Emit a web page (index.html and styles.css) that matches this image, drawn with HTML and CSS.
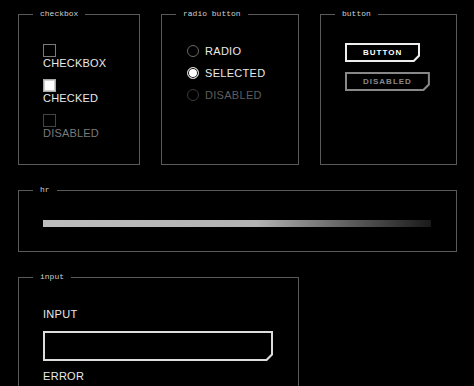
FILE: index.html
```html
<!DOCTYPE html>
<html>
	<head>
		<title>UI Kit</title>
		<meta name="viewport" content="width=device-width, initial-scale=1">
		<link rel="stylesheet" href="styles.css">
	</head>
	<body>
		<div class="row">
			<fieldset class="group group-check">
				<legend>checkbox</legend>
				<div class="inner">
					<label class="check">
						<input type="checkbox">
						<span>CHECKBOX</span>
					</label>
					<label class="check">
						<input type="checkbox" checked>
						<span>CHECKED</span>
					</label>
					<label class="check off">
						<input type="checkbox" disabled>
						<span>DISABLED</span>
					</label>
				</div>
			</fieldset>
			<fieldset class="group group-radio">
				<legend>radio button</legend>
				<div class="inner">
					<label class="radio">
						<input type="radio" name="r">
						<span>RADIO</span>
					</label>
					<label class="radio">
						<input type="radio" name="r" checked>
						<span>SELECTED</span>
					</label>
					<label class="radio off">
						<input type="radio" name="r2" disabled>
						<span>DISABLED</span>
					</label>
				</div>
			</fieldset>
			<fieldset class="group group-button">
				<legend>button</legend>
				<div class="inner">
					<button class="btn"><span>BUTTON</span></button>
					<button class="btn" disabled><span>DISABLED</span></button>
				</div>
			</fieldset>
		</div>
		<fieldset class="group group-hr">
			<legend>hr</legend>
			<div class="inner">
				<hr class="bar">
			</div>
		</fieldset>
		<fieldset class="group group-input">
			<legend>input</legend>
			<div class="inner">
				<label class="field-label" for="inp">INPUT</label>
				<div class="field">
					<input type="text" id="inp">
				</div>
				<div class="field-label">ERROR</div>
			</div>
		</fieldset>
	</body>
</html>
```

FILE: styles.css
```css
html, body {
	margin: 0;
	padding: 0;
	background: #000;
	color: #eaeaea;
	font-family: "Liberation Sans", Arial, sans-serif;
}
body {
	padding: 9px 18px;
}
.row {
	display: flex;
	gap: 21px;
}
.group {
	box-sizing: border-box;
	flex: 0 0 auto;
	margin: 0 0 20px 0;
	padding: 0;
	border: 1px solid #5a5a5a;
	min-width: 0;
}
.group legend {
	margin-left: 14px;
	padding: 0 7px;
	font-family: "Liberation Mono", monospace;
	font-size: 8px;
	line-height: 10px;
	color: #cfcfcf;
}
.group .inner {
	box-sizing: border-box;
	padding: 25px 0 0 24px;
}
.group-check { width: 122px; }
.group-radio { width: 138px; }
.group-button { width: 137px; }
.row .inner { height: 145px; }
.group-radio .inner { padding-left: 25px; padding-top: 26px; }
.group-button .inner { padding-top: 24px; }
.group-hr { width: 439px; }
.group-hr .inner { padding: 25px 25px 24px 24px; }
.group-input { width: 281px; }
.group-input .inner { padding: 26px 0 40px 24px; }

/* checkbox */
.check {
	display: block;
	margin-bottom: 10px;
	font-size: 11px;
	line-height: 12px;
	letter-spacing: 0.2px;
}
.check input {
	appearance: none;
	display: block;
	margin: 0;
	width: 13px;
	height: 13px;
	border: 1px solid #7a7a7a;
	background: #000;
}
.check input:checked {
	border-color: #a8a8a8;
	background: #fff;
	box-shadow: inset 0 0 0 1px #cfcfcf;
}
.check.off { color: #7a7a7a; }
.check.off input { border-color: #444; }

/* radio */
.radio {
	display: flex;
	align-items: center;
	gap: 6px;
	margin-bottom: 10px;
	font-size: 11px;
	line-height: 12px;
	letter-spacing: 0.3px;
}
.radio input {
	appearance: none;
	margin: 0;
	width: 12px;
	height: 12px;
	border: 1px solid #6a6a6a;
	border-radius: 50%;
	background: #000;
}
.radio input:checked {
	border-color: #d0d0d0;
	background: #fff;
	box-shadow: inset 0 0 0 1px #000;
}
.radio.off { color: #5e5e5e; }
.radio.off input { border-color: #3a3a3a; }

/* button */
.btn {
	display: block;
	margin: 0 0 10px 0;
	padding: 2px;
	border: none;
	background: #eee;
	cursor: pointer;
	clip-path: polygon(0 0, 100% 0, 100% calc(100% - 6px), calc(100% - 6px) 100%, 0 100%);
}
.btn span {
	display: block;
	padding: 0 16px;
	background: #000;
	color: #fff;
	font-family: "Liberation Sans", Arial, sans-serif;
	font-weight: bold;
	font-size: 8px;
	line-height: 15px;
	letter-spacing: 1px;
	clip-path: polygon(0 0, 100% 0, 100% calc(100% - 5px), calc(100% - 5px) 100%, 0 100%);
}
.btn:disabled {
	background: #888;
	cursor: default;
}
.btn:disabled span {
	color: #8a8a8a;
}

/* hr */
.bar {
	margin: 0;
	height: 7px;
	border: none;
	background: linear-gradient(to right, #bdbdbd 0%, #b3b3b3 55%, #5a5a5a 80%, #1a1a1a 100%);
}

/* input */
.field-label {
	display: block;
	font-size: 11px;
	line-height: 12px;
	letter-spacing: 0.3px;
	color: #eaeaea;
}
.field {
	width: 230px;
	height: 30px;
	margin: 11px 0 9px 0;
	padding: 2px;
	box-sizing: border-box;
	background: #ddd;
	clip-path: polygon(0 0, 100% 0, 100% calc(100% - 6px), calc(100% - 6px) 100%, 0 100%);
}
.field input {
	display: block;
	width: 100%;
	height: 100%;
	box-sizing: border-box;
	margin: 0;
	border: none;
	outline: none;
	background: #000;
	color: #fff;
	clip-path: polygon(0 0, 100% 0, 100% calc(100% - 5px), calc(100% - 5px) 100%, 0 100%);
}
```
